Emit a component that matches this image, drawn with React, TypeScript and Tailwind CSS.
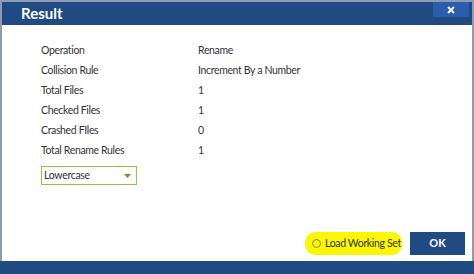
const ROWS: [string, string][] = [
  ["Operation", "Rename"],
  ["Collision Rule", "Increment By a Number"],
  ["Total Files", "1"],
  ["Checked Files", "1"],
  ["Crashed FIles", "0"],
  ["Total Rename Rules", "1"],
];

export default function App() {
  return (
    <div
      className="flex h-[274px] w-[474px] flex-col bg-[#8d9bb4] pt-[2px] px-[2px]"
      style={{ fontFamily: 'Lato, "Noto Sans", sans-serif' }}
    >
      <div className="flex h-[23px] items-start justify-between bg-[#1f4a82]">
        <span className="pl-[19px] pt-[3px] text-[15px] font-bold leading-[17px] text-white">Result</span>
        <button className="mr-[3px] flex h-[15px] w-[36px] items-center justify-center bg-[#2a5ead] text-white">
          <svg width="8" height="8" viewBox="0 0 8 8">
            <path d="M1 1 L7 7 M7 1 L1 7" stroke="white" strokeWidth="1.8" />
          </svg>
        </button>
      </div>

      <div className="flex flex-1 flex-col bg-white pl-[39px] pr-[7px] pt-[15px]">
        <div className="flex flex-col text-[10.5px] leading-[20px] tracking-[-0.35px] text-[#333]">
          {ROWS.map(([k, v]) => (
            <div key={k} className="flex whitespace-nowrap">
              <span className="w-[157px]">{k}</span>
              <span>{v}</span>
            </div>
          ))}
        </div>

        <div className="mt-[6px] flex h-[19px] w-[96px] items-center justify-between border border-[#8dc63f] px-[2px] text-[10.5px] tracking-[-0.3px] text-[#333]">
          <span>Lowercase</span>
          <svg width="7" height="4" viewBox="0 0 7 4" className="mr-[3px]">
            <path d="M0 0 L7 0 L3.5 4 Z" fill="#5e9e28" />
          </svg>
        </div>

        <div className="mt-auto mb-[6px] flex items-center justify-end gap-[8px]">
          <div className="flex h-[23px] w-[97px] items-center gap-[4px] whitespace-nowrap rounded-[10px] bg-[#fbf700] pl-[7px] text-[10.5px] tracking-[-0.35px] text-[#333]">
            <span className="h-[9px] w-[9px] shrink-0 rounded-full border border-[#8a8a60]" />
            <span>Load Working Set</span>
          </div>
          <button className="h-[23px] w-[55px] bg-[#1f4a82] text-[11px] font-bold text-white">OK</button>
        </div>
      </div>

      <div className="h-[13px] -mx-[2px] bg-[#1f4a82]" />
    </div>
  );
}
